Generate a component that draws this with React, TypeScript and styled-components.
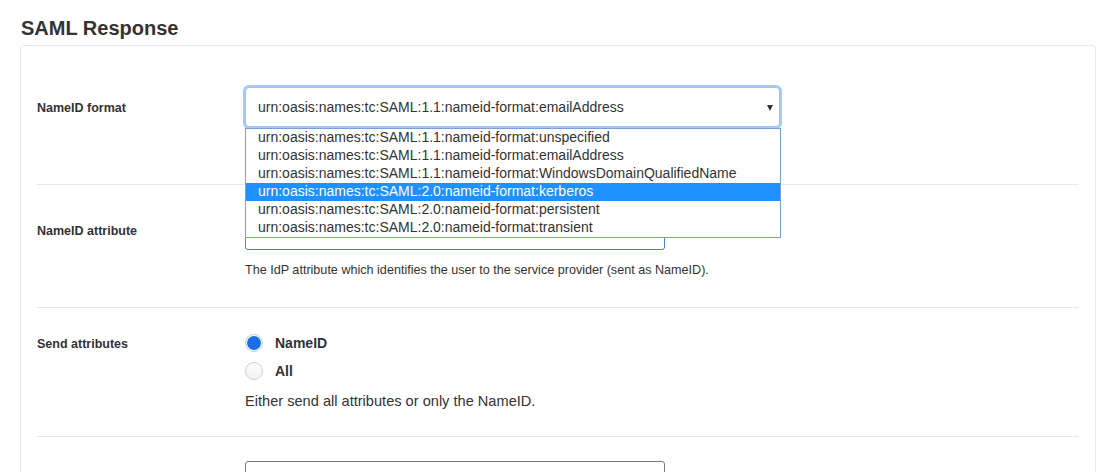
import React from "react";
import styled, { createGlobalStyle } from "styled-components";

const Global = createGlobalStyle`
  html, body { margin: 0; padding: 0; background: #fff; }
  body { font-family: "Liberation Sans", Arial, sans-serif; color: #333; overflow: hidden; }
  * { box-sizing: border-box; }
`;

const Page = styled.div`
  padding: 16px 9px 0 20px;
`;

const Title = styled.h2`
  margin: 0 0 5px 1px;
  font-size: 20px;
  line-height: 24px;
  font-weight: 700;
  color: #333;
`;

const Card = styled.section`
  border: 1px solid #e4e7eb;
  border-radius: 4px;
  padding: 0 16px;
  background: #fff;
`;

const Row = styled.div<{ $top: number; $bottom: number; $last?: boolean }>`
  display: grid;
  grid-template-columns: 208px 1fr;
  align-items: start;
  padding: ${(p) => p.$top}px 0 ${(p) => p.$bottom}px;
  border-bottom: ${(p) => (p.$last ? "none" : "1px solid #e4e7eb")};
`;

const Label = styled.div<{ $h: number }>`
  height: ${(p) => p.$h}px;
  padding-top: 2px;
  display: flex;
  align-items: center;
  font-size: 12.5px;
  font-weight: 700;
  color: #333;
`;

const Control = styled.div`
  display: flex;
  flex-direction: column;
  align-items: flex-start;
`;

const SelectWrap = styled.div`
  position: relative;
  width: 535px;
`;

const SelectBox = styled.div`
  height: 40px;
  border: 1px solid #9ec4f7;
  box-shadow: 0 0 0 2px #a6cbfa;
  border-radius: 4px;
  display: flex;
  align-items: center;
  justify-content: space-between;
  padding: 0 6px 0 12px;
  font-size: 14px;
  color: #333;
  background: #fff;
`;

const Caret = styled.span`
  width: 0;
  height: 0;
  border-left: 3.5px solid transparent;
  border-right: 3.5px solid transparent;
  border-top: 6px solid #333;
  margin-top: 1px;
`;

const Dropdown = styled.ul`
  position: absolute;
  z-index: 10;
  top: 41px;
  left: 0;
  width: 536px;
  margin: 0;
  padding: 0;
  list-style: none;
  background: #fff;
  border: 1px solid #7a9fdc;
`;

const Option = styled.li<{ $active?: boolean }>`
  height: 18px;
  line-height: 17px;
  padding-left: 12px;
  font-size: 14px;
  white-space: nowrap;
  color: ${(p) => (p.$active ? "#fff" : "#333")};
  background: ${(p) => (p.$active ? "#1e90ff" : "transparent")};
`;

const TextInput = styled.div<{ $blue?: boolean }>`
  width: 420px;
  height: 40px;
  border: 1px solid ${(p) => (p.$blue ? "#4b82d8" : "#7a7a7a")};
  border-radius: 3px;
  background: #fff;
`;

const SmallHelp = styled.p`
  margin: 12px 0 4px;
  font-size: 12.6px;
  line-height: 16px;
  color: #333;
`;

const Help = styled.p`
  margin: 10px 0 0;
  font-size: 14.6px;
  line-height: 20px;
  color: #333;
`;

const RadioList = styled.div`
  display: flex;
  flex-direction: column;
  gap: 8px;
`;

const RadioOption = styled.label`
  display: flex;
  align-items: center;
  gap: 12px;
  height: 20px;
  font-size: 14px;
  font-weight: 700;
  color: #333;
`;

const RadioDot = styled.span<{ $checked?: boolean }>`
  width: 18px;
  height: 18px;
  border-radius: 50%;
  border: 1px solid ${(p) => (p.$checked ? "#c9c9c9" : "#cfcfcf")};
  padding: 1px;
  background: ${(p) =>
    p.$checked ? "#1a6fe6" : "linear-gradient(#ffffff, #f1f1f1)"};
  background-clip: ${(p) => (p.$checked ? "content-box" : "border-box")};
  flex: none;
`;

const options = [
  "urn:oasis:names:tc:SAML:1.1:nameid-format:unspecified",
  "urn:oasis:names:tc:SAML:1.1:nameid-format:emailAddress",
  "urn:oasis:names:tc:SAML:1.1:nameid-format:WindowsDomainQualifiedName",
  "urn:oasis:names:tc:SAML:2.0:nameid-format:kerberos",
  "urn:oasis:names:tc:SAML:2.0:nameid-format:persistent",
  "urn:oasis:names:tc:SAML:2.0:nameid-format:transient",
];

export default function App() {
  return (
    <Page>
      <Global />
      <Title>SAML Response</Title>
      <Card>
        <Row $top={41} $bottom={57}>
          <Label $h={40}>NameID format</Label>
          <Control>
            <SelectWrap>
              <SelectBox>
                <span>urn:oasis:names:tc:SAML:1.1:nameid-format:emailAddress</span>
                <Caret />
              </SelectBox>
              <Dropdown>
                {options.map((o, i) => (
                  <Option key={o} $active={i === 3}>
                    {o}
                  </Option>
                ))}
              </Dropdown>
            </SelectWrap>
          </Control>
        </Row>
        <Row $top={25} $bottom={25}>
          <Label $h={40}>NameID attribute</Label>
          <Control>
            <TextInput $blue />
            <SmallHelp>
              The IdP attribute which identifies the user to the service provider (sent as NameID).
            </SmallHelp>
          </Control>
        </Row>
        <Row $top={25} $bottom={25}>
          <Label $h={20}>Send attributes</Label>
          <Control>
            <RadioList>
              <RadioOption>
                <RadioDot $checked />
                NameID
              </RadioOption>
              <RadioOption>
                <RadioDot />
                All
              </RadioOption>
            </RadioList>
            <Help>Either send all attributes or only the NameID.</Help>
          </Control>
        </Row>
        <Row $top={24} $bottom={25} $last>
          <Label $h={40}></Label>
          <Control>
            <TextInput />
          </Control>
        </Row>
      </Card>
    </Page>
  );
}
